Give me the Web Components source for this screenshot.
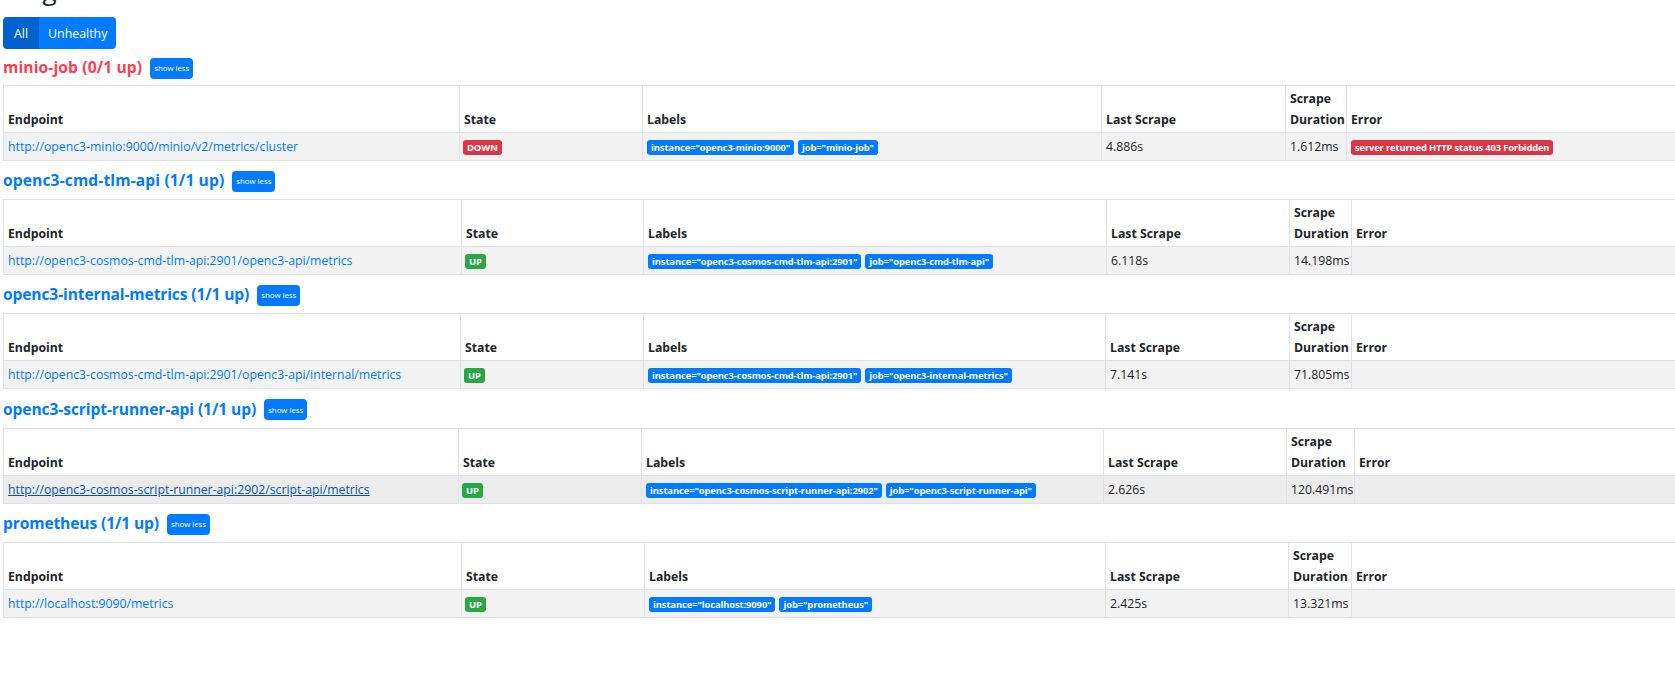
<!DOCTYPE html>
<html lang="en">
<head>
<meta charset="utf-8">
<title>Targets</title>
<style>
  body { margin: 0; background: #fff; overflow: hidden; font-family: "Open Sans", "Noto Sans", sans-serif; color: #212529; }
</style>
</head>
<body>
<targets-page></targets-page>

<script>
const FONT = `"Open Sans", "Noto Sans", sans-serif`;

class XBadge extends HTMLElement {
  constructor() {
    super();
    this.attachShadow({ mode: "open" }).innerHTML = /*html*/ `
      <style>
        :host {
          display: inline-block;
          padding: 2px 4px;
          margin: 0 4px 0 -1px;
          border-radius: 3px;
          background: #007bff;
          color: #fff;
          font: 700 9.4px/11px ${FONT};
          white-space: nowrap;
          vertical-align: middle;
          letter-spacing: -0.1px;
        }
        :host([kind="danger"]) { background: #dc3545; }
        :host([kind="success"]) { background: #28a745; }
      </style>
      <slot></slot>`;
  }
}
customElements.define("x-badge", XBadge);

class FilterBar extends HTMLElement {
  constructor() {
    super();
    this.attachShadow({ mode: "open" }).innerHTML = /*html*/ `
      <style>
        :host { display: inline-flex; margin-left: 3px; border-radius: 4px; overflow: hidden; }
        button {
          border: 0;
          margin: 0;
          height: 32px;
          padding: 0 9px;
          background: #007bff;
          color: #fff;
          font: 400 12.4px ${FONT};
        }
        .active { background: #0062cc; width: 36px; padding: 0; }
      </style>
      <button class="active">All</button><button>Unhealthy</button>`;
  }
}
customElements.define("filter-bar", FilterBar);

class TargetPool extends HTMLElement {
  constructor() {
    super();
    this.attachShadow({ mode: "open" });
  }

  set data(d) {
    const [c1, c2, c3, c4, c5] = d.cols;
    const labels = d.labels.map((l) => `<x-badge>${l}</x-badge>`).join("");
    const error = d.error ? `<x-badge kind="danger">${d.error}</x-badge>` : "";
    this.shadowRoot.innerHTML = /*html*/ `
      <style>
        :host { display: block; padding-left: 3px; }
        h3 {
          display: flex;
          align-items: center;
          height: ${d.headH}px;
          margin: 0;
          font: 700 15.6px ${FONT};
          letter-spacing: ${d.fit}px;
          color: ${d.error ? "#ff3d4f" : "#007bff"};
        }
        button {
          margin: 2px 0 0 8px;
          height: 21px;
          padding: 0 4px;
          border: 0;
          border-radius: 4px;
          background: #007bff;
          color: #fff;
          font: 400 7.8px ${FONT};
        }
        table {
          width: 1680px;
          table-layout: fixed;
          border-collapse: collapse;
          font-size: 12.25px;
        }
        th, td {
          border: 1px solid #dee2e6;
          padding: 4px;
          text-align: left;
        }
        th {
          vertical-align: bottom;
          font-weight: 700;
          line-height: 21px;
          padding: 2px 4px;
        }
        td { height: 19px; background: #f2f2f2; white-space: nowrap; }
        .wide x-badge { margin-left: 0; }
        .error x-badge { letter-spacing: -0.15px; }
        a { color: #007bff; text-decoration: none; }
        :host([hovered]) td { background: #ececec; }
        :host([hovered]) a { color: #0056b3; text-decoration: underline; }
      </style>
      <h3>${d.name} (${d.up}/1 up)<button>show less</button></h3>
      <table>
        <colgroup>
          <col style="width:${c1}px"><col style="width:${c2}px"><col style="width:${c3}px">
          <col style="width:${c4}px"><col style="width:${c5}px"><col>
        </colgroup>
        <tr>
          <th>Endpoint</th><th>State</th><th>Labels</th><th>Last Scrape</th><th>Scrape Duration</th><th>Error</th>
        </tr>
        <tr>
          <td><a href="#">${d.url}</a></td>
          <td><x-badge kind="${d.up ? "success" : "danger"}">${d.up ? "UP" : "DOWN"}</x-badge></td>
          <td class="wide">${labels}</td>
          <td>${d.last}</td>
          <td>${d.dur}</td>
          <td class="wide error">${error}</td>
        </tr>
      </table>`;
    if (d.hovered) this.setAttribute("hovered", "");
  }
}
customElements.define("target-pool", TargetPool);

const POOLS = [
  { name: "minio-job", up: 0, url: "http://openc3-minio:9000/minio/v2/metrics/cluster",
    labels: ['instance="openc3-minio:9000"', 'job="minio-job"'], last: "4.886s", dur: "1.612ms",
    error: "server returned HTTP status 403 Forbidden", cols: [456, 183, 459, 184, 61], headH: 36, fit: 0.12 },
  { name: "openc3-cmd-tlm-api", up: 1, url: "http://openc3-cosmos-cmd-tlm-api:2901/openc3-api/metrics",
    labels: ['instance="openc3-cosmos-cmd-tlm-api:2901"', 'job="openc3-cmd-tlm-api"'], last: "6.118s", dur: "14.198ms",
    cols: [458, 182, 463, 183, 62], headH: 38, fit: 0.12 },
  { name: "openc3-internal-metrics", up: 1, url: "http://openc3-cosmos-cmd-tlm-api:2901/openc3-api/internal/metrics",
    labels: ['instance="openc3-cosmos-cmd-tlm-api:2901"', 'job="openc3-internal-metrics"'], last: "7.141s", dur: "71.805ms",
    cols: [457, 183, 462, 184, 62], headH: 38, fit: -0.13 },
  { name: "openc3-script-runner-api", up: 1, url: "http://openc3-cosmos-script-runner-api:2902/script-api/metrics",
    labels: ['instance="openc3-cosmos-script-runner-api:2902"', 'job="openc3-script-runner-api"'], last: "2.626s", dur: "120.491ms",
    cols: [455, 183, 462, 183, 68], headH: 39, hovered: true, fit: -0.1 },
  { name: "prometheus", up: 1, url: "http://localhost:9090/metrics",
    labels: ['instance="localhost:9090"', 'job="prometheus"'], last: "2.425s", dur: "13.321ms",
    cols: [458, 183, 461, 183, 63], headH: 38, fit: -0.13 },
];

class TargetsPage extends HTMLElement {
  constructor() {
    super();
    const shadow = this.attachShadow({ mode: "open" });
    shadow.innerHTML = /*html*/ `
      <style>
        :host { display: block; }
        h1 { margin: -30px 0 0 3px; height: 47px; font: 400 26px/40px ${FONT}; }
      </style>
      <h1>Targets</h1>
      <filter-bar></filter-bar>`;
    for (const p of POOLS) {
      const pool = document.createElement("target-pool");
      pool.data = p;
      shadow.append(pool);
    }
  }
}
customElements.define("targets-page", TargetsPage);
</script>
</body>
</html>
